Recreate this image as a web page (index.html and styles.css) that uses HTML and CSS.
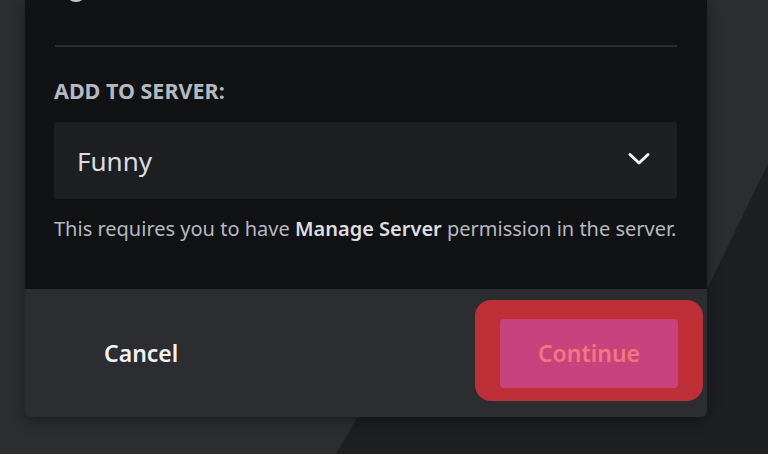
FILE: index.html
```html
<!DOCTYPE html>
<html lang="en">
<head>
<meta charset="utf-8">
<title>Add to server</title>
<link rel="stylesheet" href="styles.css">
</head>
<body>
<div class="backdrop-shape"></div>
<div class="modal">
  <div class="modal-body">
    <div class="prev-row"><span class="prev-icon"></span></div>
    <div class="divider"></div>
    <h2 class="label">ADD TO SERVER:</h2>
    <div class="select">
      <span class="select-value">Funny</span>
      <svg class="chevron" width="24" height="16" viewBox="0 0 24 16" aria-hidden="true">
        <path d="M3 3.5l9 8.5 9-8.5" fill="none" stroke="#f2f3f5" stroke-width="3" stroke-linecap="round" stroke-linejoin="round"/>
      </svg>
    </div>
    <p class="hint">This requires you to have <strong>Manage Server</strong> permission in the server.</p>
  </div>
  <div class="modal-footer">
    <button class="btn-cancel">Cancel</button>
    <div class="highlight">
      <button class="btn-continue">Continue</button>
    </div>
  </div>
</div>
</body>
</html>
```
FILE: styles.css
```css
html, body {
  margin: 0;
  padding: 0;
}
body {
  width: 768px;
  height: 454px;
  overflow: hidden;
  background: #2b2d31;
  font-family: "Noto Sans", "Open Sans", sans-serif;
  position: relative;
}
.backdrop-shape {
  position: absolute;
  inset: 0;
  background: #1e1f22;
  clip-path: polygon(336px 454px, 400px 344px, 700px 300px, 708px 287px, 760px 180px, 848px 0, 900px 0, 900px 454px);
}
.modal {
  position: relative;
  width: 682px;
  margin-left: 25px;
  box-shadow: 0 4px 14px rgba(0, 0, 0, 0.35);
  border-radius: 0 0 6px 6px;
}
.modal-body {
  background: #111214;
  padding: 0 30px 0 29px;
  height: 289px;
  box-sizing: border-box;
  overflow: hidden;
}
.prev-row {
  height: 24px;
  margin-top: -21px;
  padding-left: 11px;
  display: flex;
  align-items: center;
}
.prev-icon {
  width: 22px;
  height: 22px;
  border-radius: 50%;
  border: 3px solid #c4c9ce;
  box-sizing: border-box;
}
.divider {
  height: 2px;
  background: #2b2d31;
  margin: 42px 0 0 1px;
}
.label {
  margin: 31px 0 0;
  font-size: 21.5px;
  font-weight: 700;
  color: #b5bac1;
  line-height: 26px;
}
.select {
  margin-top: 18px;
  height: 77px;
  background: #1e1f22;
  border-radius: 4px;
  display: flex;
  align-items: center;
  justify-content: space-between;
  padding: 0 26px 0 23px;
}
.select-value {
  font-size: 26px;
  color: #dbdee1;
  line-height: 30px;
}
.chevron {
  display: block;
  margin-top: -3px;
}
.hint {
  margin: 17.5px 0 0;
  font-size: 20px;
  line-height: 24px;
  color: #b5bac1;
  white-space: nowrap;
}
.hint strong {
  color: #dbdee1;
  font-weight: 600;
}
.modal-footer {
  height: 128px;
  background: #2b2d31;
  border-radius: 0 0 6px 6px;
  display: flex;
  align-items: center;
  justify-content: space-between;
  padding: 0 29px 0 79px;
  box-sizing: border-box;
}
.btn-cancel {
  background: none;
  border: none;
  padding: 0;
  font-family: inherit;
  font-size: 23px;
  font-weight: 600;
  color: #f2f3f5;
}
.highlight {
  background: #bf2f38;
  border-radius: 16px;
  padding: 19px 25px 13px;
  margin: -6px -25px 0;
  display: flex;
}
.btn-continue {
  width: 178px;
  height: 69px;
  background: #c8437e;
  border: none;
  border-radius: 4px;
  font-family: inherit;
  font-size: 23px;
  font-weight: 600;
  color: #f0787c;
}
```
